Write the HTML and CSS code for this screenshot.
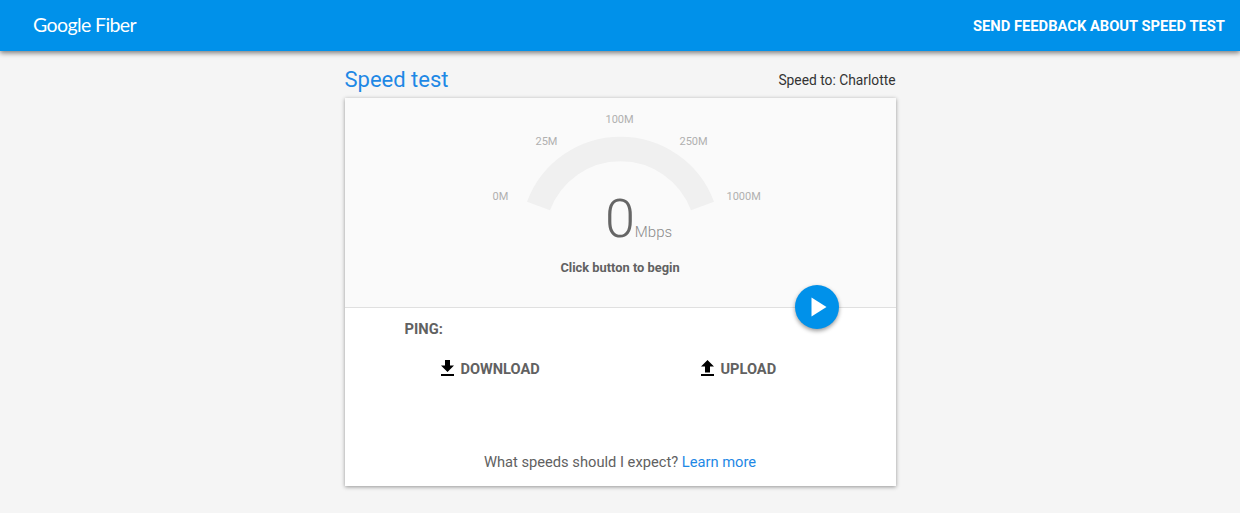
FILE: index.html
```html
<!DOCTYPE html>
<html lang="en">
<head>
<meta charset="utf-8">
<title>Speed test</title>
<link rel="stylesheet" href="styles.css">
</head>
<body>
<header class="topbar">
  <span class="logo">Google Fiber</span>
  <a class="feedback">SEND FEEDBACK ABOUT SPEED TEST</a>
</header>
<main class="page">
  <div class="title-row">
    <h1 class="title">Speed test</h1>
    <span class="speed-to">Speed to: Charlotte</span>
  </div>
  <section class="card">
    <div class="gauge-panel">
      <div class="gauge">
        <svg class="arc" width="551" height="209" viewBox="0 0 551 209">
          <path d="M193.500 108 A87.500 87.500 0 0 1 357.500 108" fill="none" stroke="#f0f0f0" stroke-width="24.500"/>
        </svg>
        <span class="tick t0">0M</span>
        <span class="tick t25">25M</span>
        <span class="tick t100">100M</span>
        <span class="tick t250">250M</span>
        <span class="tick t1000">1000M</span>
        <div class="reading"><span class="num">0</span><span class="unit">Mbps</span></div>
        <div class="hint">Click button to begin</div>
      </div>
      <button class="play" aria-label="Start">
        <svg class="play-icon" width="16" height="20" viewBox="0 0 16 20"><path d="M0.500 0.500 L15.500 10 L0.500 19.500 Z" fill="#fff"/></svg>
      </button>
    </div>
    <div class="results">
      <div class="ping">PING:</div>
      <div class="metrics">
        <div class="metric">
          <svg width="15" height="16" viewBox="0 0 15 16"><path d="M5 0h5v5.500h4l-6.500 6.500-6.500-6.500h4z M1 14h13v2h-13z" fill="#000"/></svg>
          <span>DOWNLOAD</span>
        </div>
        <div class="metric">
          <svg width="15" height="16" viewBox="0 0 15 16"><path d="M5 12.500h5V6.500h4L7.500 0 1 6.500h4z M1 14h13v2h-13z" fill="#000"/></svg>
          <span>UPLOAD</span>
        </div>
      </div>
      <p class="expect">What speeds should I expect? <a class="more">Learn more</a></p>
    </div>
  </section>
</main>
</body>
</html>
```
FILE: styles.css
```css
* { box-sizing: border-box; }
html, body { margin: 0; height: 100%; }
body {
  background: #f5f5f5;
  font-family: Roboto, "Liberation Sans", sans-serif;
  color: #555;
  overflow: hidden;
}
.topbar {
  height: 51px;
  background: #0091ea;
  box-shadow: 0 2px 5px rgba(0,0,0,.5);
  display: flex;
  align-items: center;
  justify-content: space-between;
  padding: 0 15px 0 33px;
  color: #fff;
}
.logo {
  font-family: Lato, sans-serif;
  font-size: 19.5px;
  font-weight: 400;
  letter-spacing: -0.6px;
  line-height: 24px;
  margin-top: -2px;
}
.feedback {
  font-size: 14.73px;
  font-weight: 700;
  margin-top: 1px;
}
.page {
  width: 551px;
  margin: 0 auto;
}
.title-row {
  height: 47px;
  display: flex;
  align-items: center;
  justify-content: space-between;
  padding-top: 10px;
}
.title {
  margin: 0;
  font-size: 22px;
  font-weight: 400;
  color: #1e88e5;
}
.speed-to {
  font-size: 13.8px;
  color: #333;
}
.card {
  background: #fff;
  height: 388px;
  box-shadow: 0 1px 4px rgba(0,0,0,.4);
  display: flex;
  flex-direction: column;
}
.gauge-panel {
  position: relative;
  height: 210px;
  background: #fafafa;
  border-bottom: 1px solid #e0e0e0;
}
.gauge { position: relative; height: 209px; }
.arc { position: absolute; left: 0; top: 0; }
.tick {
  position: absolute;
  font-size: 11px;
  color: #b0b0b0;
  line-height: 13px;
  white-space: nowrap;
}
.t0 { left: 148px; top: 92px; }
.t25 { left: 191px; top: 37px; }
.t100 { left: 261px; top: 15px; }
.t250 { left: 335px; top: 37px; }
.t1000 { left: 382px; top: 92px; }
.reading {
  position: absolute;
  left: 0; right: 0; top: 88px;
  display: flex;
  justify-content: center;
  align-items: baseline;
  padding-left: 37px;
}
.num {
  font-size: 54px;
  font-weight: 300;
  line-height: 66px;
  color: #666;
}
.unit {
  font-size: 15px;
  font-weight: 300;
  color: #8a8a8a;
}
.hint {
  position: absolute;
  left: 0; right: 0; top: 162px;
  text-align: center;
  font-size: 12.85px;
  font-weight: 700;
  line-height: 16px;
  color: #616161;
}
.play {
  position: absolute;
  right: 57px;
  top: 187px;
  width: 44px;
  height: 44px;
  border: 0;
  padding: 0 0 0 4px;
  border-radius: 50%;
  background: #0091ea;
  box-shadow: 0 2px 4px rgba(0,0,0,.4);
  display: flex;
  align-items: center;
  justify-content: center;
}
.results {
  flex: 1;
  display: flex;
  flex-direction: column;
  padding-top: 12px;
}
.ping {
  margin-left: 60px;
  font-size: 14.7px;
  font-weight: 700;
  line-height: 18px;
  color: #616161;
}
.metrics {
  display: grid;
  grid-template-columns: 260px 1fr;
  margin-top: 21px;
  padding-left: 95px;
}
.metric {
  display: flex;
  align-items: center;
  gap: 6px;
  font-size: 14.6px;
  font-weight: 700;
  line-height: 20px;
  color: #616161;
}
.metric svg { margin-bottom: 2px; }
.expect {
  margin: auto 0 15px;
  text-align: center;
  font-size: 14.7px;
  line-height: 18px;
  color: #616161;
}
.more { color: #1e88e5; }
```
